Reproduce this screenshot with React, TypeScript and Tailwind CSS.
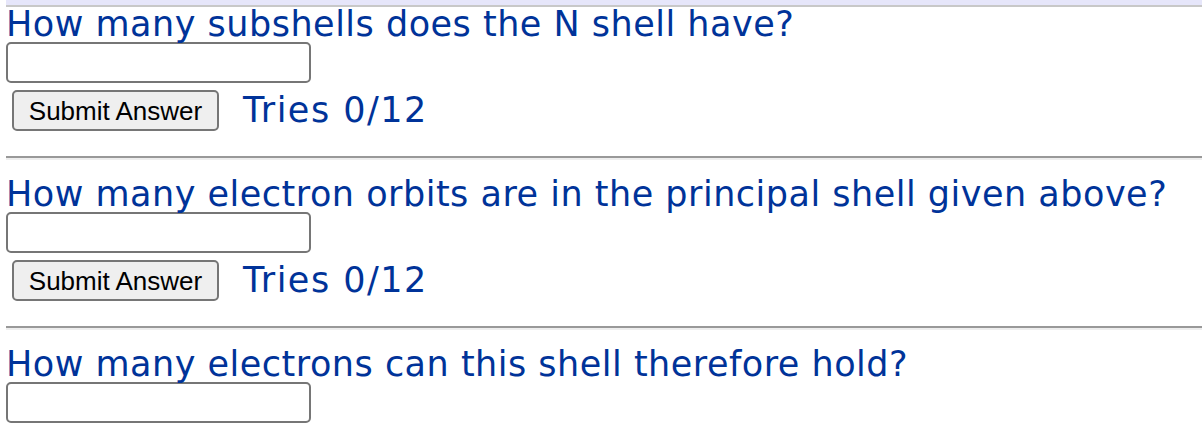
const questions = [
  { text: 'How many subshells does the N shell have?', button: true },
  { text: 'How many electron orbits are in the principal shell given above?', button: true },
  { text: 'How many electrons can this shell therefore hold?', button: false },
];

function Question({ text, button }: { text: string; button: boolean }) {
  return (
    <div>
      <div className="text-[35px] leading-[35px] tracking-[0.5px] text-[#003399] whitespace-nowrap">{text}</div>
      <input
        type="text"
        className="block w-[305px] h-[41px] bg-white border-2 border-[#767676] rounded-[5px] outline-none"
      />
      {button && (
        <>
          <div className="flex items-center mt-[7px]">
            <button
              type="button"
              className="ml-[6px] w-[207px] h-[41px] bg-[#efefef] border-2 border-[#767676] rounded-[5px] text-[26px] leading-none text-black"
              style={{ fontFamily: '"Liberation Sans", Arial, sans-serif' }}
            >
              Submit Answer
            </button>
            <span className="ml-[24px] text-[35px] leading-[35px] tracking-[1.5px] text-[#003399]">Tries 0/12</span>
          </div>
          <hr className="mt-[25px] mb-[17px] border-0 border-t-2 border-b-2 border-t-[#999999] border-b-[#eeeeee]" />
        </>
      )}
    </div>
  );
}

export default function App() {
  return (
    <div
      className="w-[1202px] h-[426px] overflow-hidden bg-white pl-[6px]"
      style={{ fontFamily: '"DejaVu Sans", Verdana, sans-serif' }}
    >
      <div className="h-[7px] bg-[#e6e6fa] border-b-2 border-[#c8c8c8]" />
      {questions.map((q, i) => (
        <Question key={i} text={q.text} button={q.button} />
      ))}
    </div>
  );
}
